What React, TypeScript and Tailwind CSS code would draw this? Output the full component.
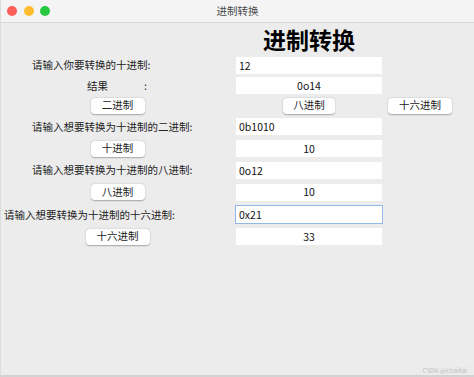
import { useState } from 'react';

const btn =
  'h-[16px] rounded-[4px] bg-white text-[10.5px] leading-none text-[#222] shadow-[0_0.5px_1.5px_rgba(0,0,0,0.3)] flex items-center justify-center';
const box = 'h-[17px] w-[146px] bg-white text-[10.5px] text-[#111] flex items-center';

export default function App() {
  const [dec, setDec] = useState('12');
  const [bin, setBin] = useState('0b1010');
  const [oct, setOct] = useState('0o12');
  const [hex, setHex] = useState('0x21');

  return (
    <div className="h-[377px] w-[474px] overflow-hidden bg-[#ececec] font-['Noto_Sans_CJK_SC',sans-serif] border-b-2 border-[#d2d2d2] border-l border-l-[#dcdcdc]">
      {/* 标题栏 */}
      <div className="relative flex h-[23px] items-center justify-center border-b border-[#d8d8d8] bg-[#f4f4f4]">
        <div className="absolute left-[6px] top-[6px] flex gap-[6.5px]">
          <span className="h-[10px] w-[10px] rounded-full bg-[#fe5f57]" />
          <span className="h-[10px] w-[10px] rounded-full bg-[#febc2e]" />
          <span className="h-[10px] w-[10px] rounded-full bg-[#28c840]" />
        </div>
        <span className="text-[10.5px] text-[#4a4a4a]">进制转换</span>
      </div>

      <div className="grid grid-cols-[233px_150px_72px] grid-rows-[32px_20px_21px_19px_23px_21px_22px_22px_23px_21px] items-center">
        {/* 标题 */}
        <div />
        <div className="justify-self-center text-[23px] font-bold leading-none text-black">进制转换</div>
        <div />

        {/* 十进制输入 */}
        <div className="pl-[31px] text-[10.5px] text-[#222]">请输入你要转换的十进制:</div>
        <input
          value={dec}
          onChange={(e) => setDec(e.target.value)}
          className={`${box} justify-self-center px-[3px] outline-none`}
        />
        <div />

        <div className="flex text-[10.5px] text-[#222]">
          <span className="pl-[86px]">结果</span>
          <span className="pl-[36px]">:</span>
        </div>
        <div className={`${box} justify-self-center justify-center`}>0o14</div>
        <div />

        <button className={`${btn} w-[54px] justify-self-center`}>二进制</button>
        <button className={`${btn} w-[52px] justify-self-center`}>八进制</button>
        <button className={`${btn} w-[64px] justify-self-center`}>十六进制</button>

        {/* 二进制 */}
        <div className="pl-[31px] text-[10.5px] text-[#222]">请输入想要转换为十进制的二进制:</div>
        <input
          value={bin}
          onChange={(e) => setBin(e.target.value)}
          className={`${box} justify-self-center px-[3px] outline-none`}
        />
        <div />

        <button className={`${btn} w-[54px] justify-self-center`}>十进制</button>
        <div className={`${box} justify-self-center justify-center`}>10</div>
        <div />

        {/* 八进制 */}
        <div className="pl-[31px] text-[10.5px] text-[#222]">请输入想要转换为十进制的八进制:</div>
        <input
          value={oct}
          onChange={(e) => setOct(e.target.value)}
          className={`${box} justify-self-center px-[3px] outline-none`}
        />
        <div />

        <button className={`${btn} w-[54px] justify-self-center`}>八进制</button>
        <div className={`${box} justify-self-center justify-center`}>10</div>
        <div />

        {/* 十六进制 */}
        <div className="pl-[3px] text-[10.5px] text-[#222]">请输入想要转换为十进制的十六进制:</div>
        <input
          value={hex}
          onChange={(e) => setHex(e.target.value)}
          className="h-[19px] w-[148px] justify-self-center border-[1.5px] border-[#93b8e8] bg-white px-[3px] text-[10.5px] text-[#111] outline-none"
        />
        <div />

        <button className={`${btn} w-[64px] justify-self-center`}>十六进制</button>
        <div className={`${box} justify-self-center justify-center`}>33</div>
        <div />
      </div>

      <div className="mt-[120px] pr-[7px] text-right text-[6px] leading-[8px] text-[#bdbdbd]">CSDN @lcbaikai</div>
    </div>
  );
}
